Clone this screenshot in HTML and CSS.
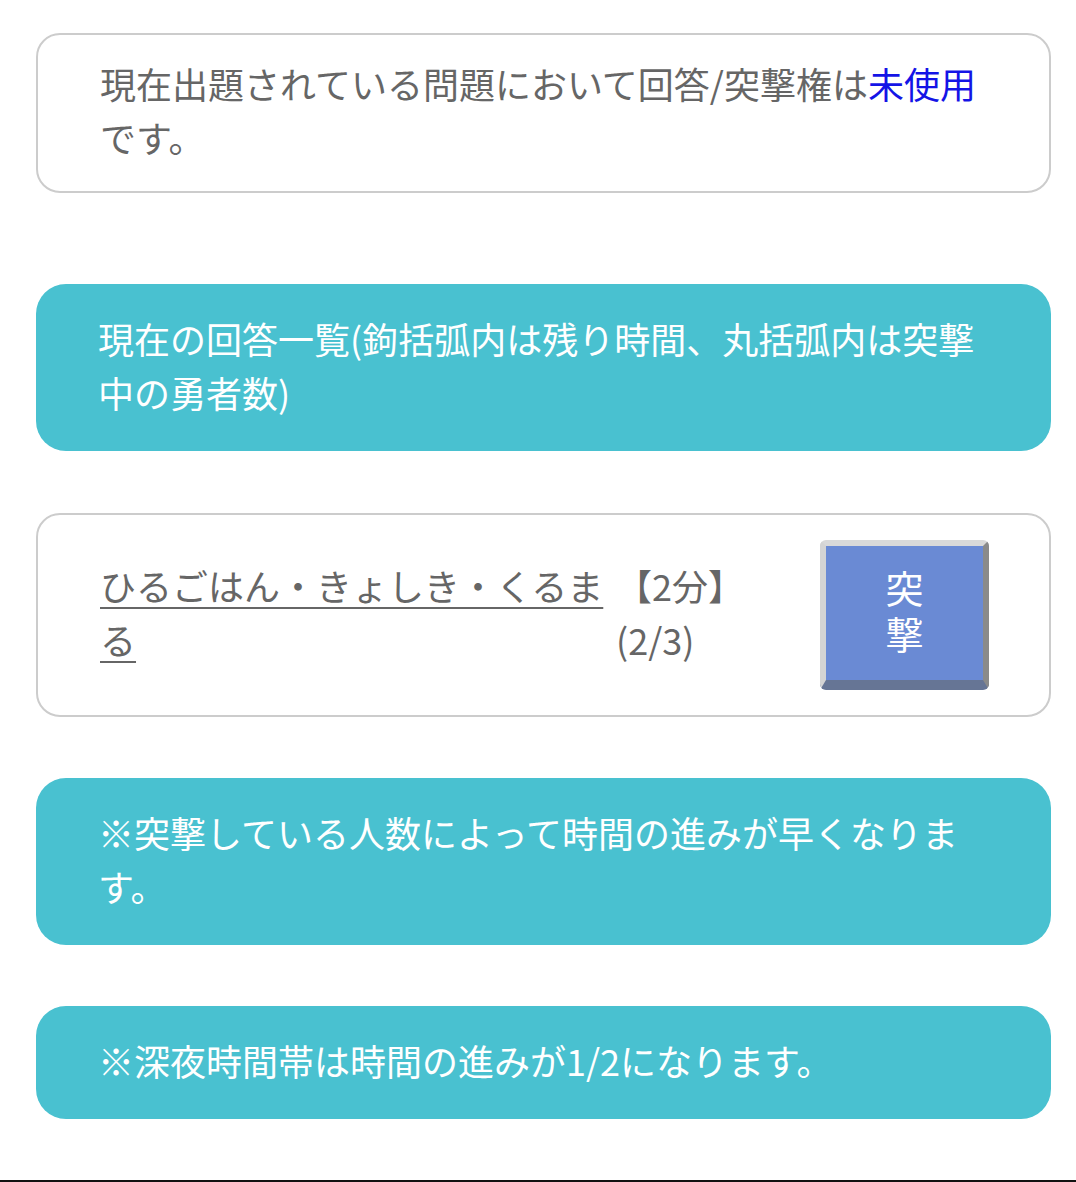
FILE: index.html
```html
<!DOCTYPE html>
<html lang="ja">
<head>
  <meta charset="UTF-8" />
  <title>回答一覧</title>
  <link rel="stylesheet" href="styles.css">
</head>
<body>

  <div class="page">
    <div class="status-box">
      現在出題されている問題において回答/突撃権は<span class="unused">未使用</span>です。
    </div>

    <div class="info-box list-title">
      現在の回答一覧(鉤括弧内は残り時間、丸括弧内は突撃中の勇者数)
    </div>

    <div class="answer-box">
      <div class="answer-text">
        <a href="#" class="answer-link">ひるごはん・きょしき・くるまる</a>
      </div>
      <div class="answer-meta">【2分】(2/3)</div>
      <button type="button" class="attack-btn">突<br>撃</button>
    </div>

    <div class="info-box">
      ※突撃している人数によって時間の進みが早くなります。
    </div>

    <div class="info-box">
      ※深夜時間帯は時間の進みが1/2になります。
    </div>
  </div>

  <div class="bottom-line"></div>

</body>
</html>
```

FILE: styles.css
```css
* {
  box-sizing: border-box;
}
body {
  margin: 0;
  font-family: "Noto Sans CJK JP", "Noto Sans", sans-serif;
  font-size: 36px;
  line-height: 54px;
  color: #666;
  background-color: white;
}
.page {
  padding: 33px 25px 0 36px;
}
.status-box {
  border: 2px solid #ccc;
  border-radius: 24px;
  padding: 21px 62px 27px;
  margin-bottom: 91px;
}
.unused {
  color: #1414e6;
}
.info-box {
  background-color: #49c1d0;
  color: white;
  border-radius: 30px;
  padding: 26.5px 62px 32.5px;
  margin-bottom: 61px;
}
.list-title {
  margin-bottom: 62px;
}
.answer-box {
  display: flex;
  align-items: center;
  border: 2px solid #ccc;
  border-radius: 24px;
  padding: 25px 60px 25px 62px;
  margin-bottom: 61px;
}
.answer-text {
  flex: 0 0 506px;
  margin-bottom: 6px;
}
.answer-link {
  color: #666;
  text-decoration: underline;
  text-underline-offset: 6px;
  text-decoration-thickness: 2px;
}
.answer-meta {
  flex: 0 0 160px;
  margin-left: 10px;
  margin-bottom: 6px;
}
.attack-btn {
  margin-left: auto;
  width: 169px;
  height: 150px;
  padding: 0 0 6px;
  font-family: inherit;
  font-size: 38px;
  line-height: 46px;
  color: white;
  background-color: #6a8ad4;
  border-style: solid;
  border-width: 6px 6px 10px 6px;
  border-color: #d9d9d9 #8a8a8a #667595 #d4d4d4;
  border-radius: 6px;
  cursor: pointer;
}
.bottom-line {
  border-top: 3px solid #111;
}
```
